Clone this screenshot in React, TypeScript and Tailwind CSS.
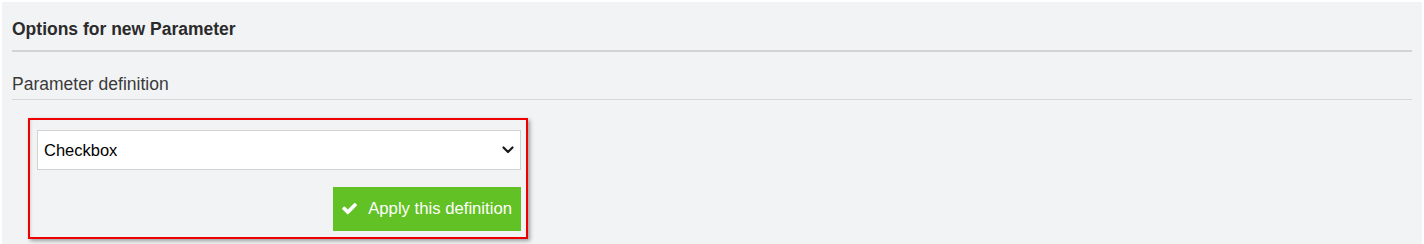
import React from "react";

export default function App() {
  return (
    <div className="w-[1424px] h-[244px] bg-white p-[2px] font-['Liberation_Sans',Arial,sans-serif] overflow-hidden">
      <div className="h-[242px] bg-[#f2f3f5] px-[10px]">
        <div className="pt-[15px] pb-[9px] border-b-2 border-[#d2d3d5]">
          <h2 className="text-[17.5px] leading-[24px] font-bold text-[#2b2b2b]">Options for new Parameter</h2>
        </div>
        <div className="mt-[20px] pb-[3px] border-b border-[#d6d7d9]">
          <h3 className="text-[17.5px] leading-[24px] text-[#3a3a3a]">Parameter definition</h3>
        </div>
        <div className="mt-[18px] ml-[16px] w-[500px] border-2 border-[#ee0000] shadow-[2px_2px_4px_rgba(0,0,0,0.35),inset_3px_0_3px_-2px_rgba(0,0,0,0.12)] pt-[10px] pb-[6px] pl-[7px] pr-[5px] flex flex-col">
          <div className="h-[40px] bg-white border border-[#d2d2d2] flex items-center justify-between pl-[6px] pr-[6px]">
            <span className="text-[16.5px] text-black">Checkbox</span>
            <svg width="12" height="8" viewBox="0 0 12 8">
              <path d="M1.5 1.5 L6 6 L10.5 1.5" fill="none" stroke="#1a1a1a" strokeWidth="2.2" strokeLinecap="round" strokeLinejoin="round" />
            </svg>
          </div>
          <div className="mt-[17px] flex justify-end">
            <button className="h-[44px] bg-[#62c124] text-white flex items-center pl-[9px] pr-[9px] text-[16.7px]">
              <svg width="15" height="11.4" viewBox="109 338 1562 1184" className="mr-[11px]">
                <path d="M1671 566q0 40-28 68l-724 724-136 136q-28 28-68 28t-68-28l-136-136-362-362q-28-28-28-68t28-68l136-136q28-28 68-28t68 28l294 295 656-657q28-28 68-28t68 28l136 136q28 28 28 68z" fill="#ffffff" />
              </svg>
              <span>Apply this definition</span>
            </button>
          </div>
        </div>
      </div>
    </div>
  );
}
